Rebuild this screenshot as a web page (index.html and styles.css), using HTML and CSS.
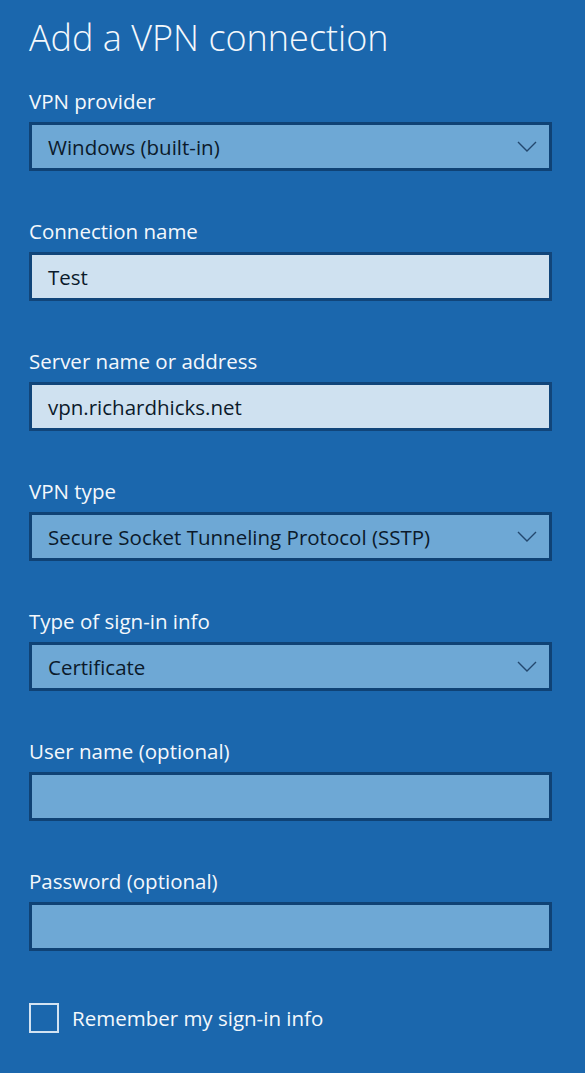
FILE: index.html
```html
<!DOCTYPE html>
<html>
<head>
<meta charset="utf-8">
<link rel="stylesheet" href="styles.css">
</head>
<body>
<div class="page">
  <h1 class="title">Add a VPN connection</h1>

  <div class="field">
    <div class="label">VPN provider</div>
    <div class="box select"><span class="value">Windows (built-in)</span><svg class="chev" width="20" height="11" viewBox="0 0 20 11"><path d="M1 1 L10 10 L19 1" fill="none" stroke="#23486e" stroke-width="1.4"/></svg></div>
  </div>

  <div class="field">
    <div class="label">Connection name</div>
    <div class="box input filled"><span class="value">Test</span></div>
  </div>

  <div class="field">
    <div class="label">Server name or address</div>
    <div class="box input filled"><span class="value">vpn.richardhicks.net</span></div>
  </div>

  <div class="field">
    <div class="label">VPN type</div>
    <div class="box select"><span class="value">Secure Socket Tunneling Protocol (SSTP)</span><svg class="chev" width="20" height="11" viewBox="0 0 20 11"><path d="M1 1 L10 10 L19 1" fill="none" stroke="#23486e" stroke-width="1.4"/></svg></div>
  </div>

  <div class="field">
    <div class="label">Type of sign-in info</div>
    <div class="box select"><span class="value">Certificate</span><svg class="chev" width="20" height="11" viewBox="0 0 20 11"><path d="M1 1 L10 10 L19 1" fill="none" stroke="#23486e" stroke-width="1.4"/></svg></div>
  </div>

  <div class="field">
    <div class="label">User name (optional)</div>
    <div class="box input"></div>
  </div>

  <div class="field">
    <div class="label">Password (optional)</div>
    <div class="box input"></div>
  </div>

  <div class="check-row">
    <span class="checkbox"></span>
    <span class="check-label">Remember my sign-in info</span>
  </div>
</div>
</body>
</html>
```

FILE: styles.css
```css
html, body {
  margin: 0;
  padding: 0;
  background: #1b67ad;
}
body {
  font-family: "Open Sans", "Noto Sans", "Liberation Sans", sans-serif;
  color: #f4f8fc;
}
.page {
  width: 585px;
  height: 1073px;
  padding: 13px 33px 0 29px;
  box-sizing: border-box;
}
.title {
  margin: 0;
  font-weight: 300;
  font-size: 36px;
  line-height: 50px;
  color: #f4f8fc;
}
.field {
  margin-top: 25px;
}
.field + .field {
  margin-top: 47px;
}
.label {
  font-size: 20.5px;
  line-height: 26px;
  margin-bottom: 8px;
}
.box {
  height: 49px;
  box-sizing: border-box;
  border: 3px solid #0f4275;
  background: #6ea8d5;
  display: flex;
  align-items: center;
  padding: 0 12px 0 16px;
  color: #0b1a2b;
  font-size: 20.5px;
}
.box.filled {
  background: #cfe1f0;
  border-color: #11457a;
}
.select {
  justify-content: space-between;
}
.chev {
  display: block;
}
.check-row {
  display: flex;
  align-items: center;
  margin-top: 52px;
  gap: 13px;
}
.checkbox {
  width: 30px;
  height: 30px;
  box-sizing: border-box;
  border: 2px solid #d3e3f2;
}
.check-label {
  font-size: 20.5px;
  line-height: 26px;
}
```
